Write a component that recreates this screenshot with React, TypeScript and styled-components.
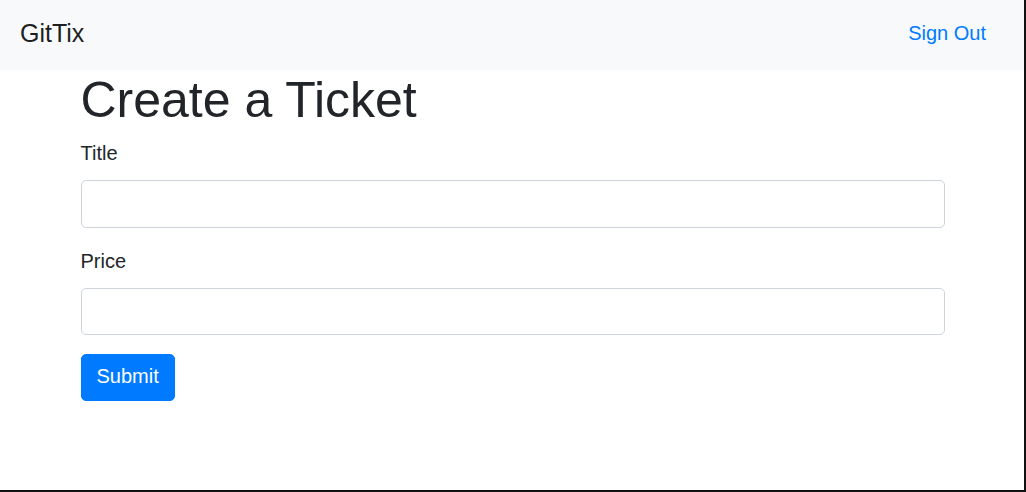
import React, { useState } from 'react';
import styled, { createGlobalStyle } from 'styled-components';

const GlobalStyle = createGlobalStyle`
  html, body {
    margin: 0;
    padding: 0;
    background: #fff;
  }
  body {
    font-family: "Liberation Sans", Arial, Helvetica, sans-serif;
    font-size: 20px;
    line-height: 1.5;
    color: #212529;
  }
  * {
    box-sizing: border-box;
  }
`;

const Frame = styled.div`
  width: 1026px;
  height: 492px;
  border-right: 2px solid #111;
  border-bottom: 2px solid #111;
  overflow: hidden;
  background: #fff;
`;

const Navbar = styled.nav`
  display: flex;
  align-items: center;
  justify-content: space-between;
  height: 70px;
  padding: 10px 20px;
  background: #f8f9fa;
`;

const Brand = styled.a`
  font-size: 25px;
  line-height: 37.5px;
  padding: 5.25px 0 7.25px;
  color: rgba(0, 0, 0, 0.9);
  text-decoration: none;
  cursor: pointer;
`;

const NavList = styled.ul`
  display: flex;
  justify-content: flex-end;
  list-style: none;
  margin: 0;
  padding: 0;
`;

const NavLink = styled.a`
  display: block;
  padding: 8px 18px 12px 10px;
  color: #007bff;
  text-decoration: none;
  cursor: pointer;
`;

const Container = styled.div`
  width: 902px;
  margin: 0 auto;
  padding: 0 18.5px 0 19.5px;
`;

const Heading = styled.h1`
  margin: 0 0 10px;
  font-size: 50px;
  font-weight: 500;
  line-height: 1.2;
`;

const FormGroup = styled.div`
  margin-bottom: 20px;
`;

const Label = styled.label`
  display: block;
  height: 40px;
  line-height: 26px;
  margin: 0;
`;

const Input = styled.input`
  display: block;
  width: 100%;
  height: 47.5px;
  padding: 7.5px 15px;
  font-family: inherit;
  font-size: 20px;
  line-height: 1.5;
  color: #495057;
  background: #fff;
  border: 1.25px solid #ced4da;
  border-radius: 5px;
  outline: none;
`;

const Button = styled.button`
  display: inline-block;
  margin-top: -1px;
  padding: 6px 15px 9px;
  font-family: inherit;
  font-size: 20px;
  line-height: 1.5;
  color: #fff;
  background: #007bff;
  border: 1.25px solid #007bff;
  border-radius: 5px;
  cursor: pointer;
`;

const App = () => {
  const [title, setTitle] = useState('');
  const [price, setPrice] = useState('');

  return (
    <Frame>
      <GlobalStyle />
      <Navbar>
        <Brand>GitTix</Brand>
        <NavList>
          <li>
            <NavLink>Sign Out</NavLink>
          </li>
        </NavList>
      </Navbar>
      <Container>
        <Heading>Create a Ticket</Heading>
        <form onSubmit={(e) => e.preventDefault()}>
          <FormGroup>
            <Label>Title</Label>
            <Input value={title} onChange={(e) => setTitle(e.target.value)} />
          </FormGroup>
          <FormGroup>
            <Label>Price</Label>
            <Input value={price} onChange={(e) => setPrice(e.target.value)} />
          </FormGroup>
          <Button>Submit</Button>
        </form>
      </Container>
    </Frame>
  );
};

export default App;
